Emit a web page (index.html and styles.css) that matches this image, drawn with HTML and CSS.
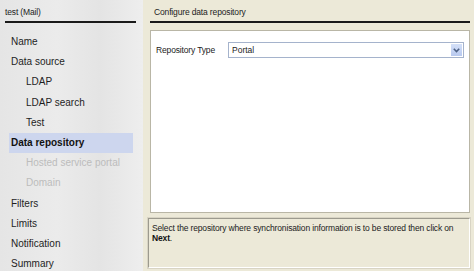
FILE: index.html
```html
<!DOCTYPE html>
<html>
<head>
<meta charset="utf-8">
<link rel="stylesheet" href="styles.css">
</head>
<body>
<div class="sidebar">
  <div class="side-head">test (Mail)</div>
  <ul class="steps">
    <li class="step">Name</li>
    <li class="step">Data source</li>
    <li class="step sub">LDAP</li>
    <li class="step sub">LDAP search</li>
    <li class="step sub">Test</li>
    <li class="step active">Data repository</li>
    <li class="step sub disabled">Hosted service portal</li>
    <li class="step sub disabled">Domain</li>
    <li class="step">Filters</li>
    <li class="step">Limits</li>
    <li class="step">Notification</li>
    <li class="step">Summary</li>
  </ul>
</div>
<div class="main">
  <div class="main-head">Configure data repository</div>
  <div class="panel">
    <div class="field">
      <span class="label">Repository Type</span>
      <div class="select">
        <span class="value">Portal</span>
        <span class="drop"><svg width="7" height="5" viewBox="0 0 7 5"><path d="M0.8 0.8 L3.5 3.5 L6.2 0.8" fill="none" stroke="#4d6185" stroke-width="1.6"/></svg></span>
      </div>
    </div>
  </div>
  <div class="info">Select the repository where synchronisation information is to be stored then click on <b>Next</b>.</div>
</div>
</body>
</html>
```
FILE: styles.css
```css
html, body {
  margin: 0;
  padding: 0;
}
body {
  width: 474px;
  height: 271px;
  overflow: hidden;
  display: flex;
  font-family: "Liberation Sans", Arial, sans-serif;
}
.sidebar {
  width: 143px;
  box-sizing: border-box;
  padding: 0 7px 0 5px;
  background: linear-gradient(90deg, #e5e5e5 0%, #ebebeb 40%, #e4e4e4 70%, #eeeeee 100%);
  color: #1e1e1e;
}
.side-head {
  font-size: 8.5px;
  letter-spacing: -0.15px;
  line-height: 10px;
  padding: 7px 0 4px 0;
  border-bottom: 2px solid #1a1a1a;
  color: #222;
}
.steps {
  list-style: none;
  margin: 9px 0 0 0;
  padding: 0;
}
.step {
  font-size: 10px;
  line-height: 20.2px;
  height: 20.2px;
  margin-left: 4px;
  padding-left: 2px;
  width: 124px;
  box-sizing: border-box;
  white-space: nowrap;
}
.step.sub {
  padding-left: 17px;
}
.step.active {
  background: #cdd6ee;
  font-weight: bold;
  color: #111;
}
.step.disabled {
  color: #bcbcbc;
}
.main {
  flex: 1;
  background: #ece9d8;
  padding: 0 4px 3px 5px;
  display: flex;
  flex-direction: column;
}
.main-head {
  font-size: 8.5px;
  letter-spacing: -0.15px;
  line-height: 10px;
  padding: 7px 0 4px 4px;
  margin-left: 2px;
  border-bottom: 2px solid #1a1a1a;
  color: #222;
}
.panel {
  margin: 7px 0 0 2px;
  height: 183px;
  box-sizing: border-box;
  background: #fff;
  border: 1px solid #b9b6a6;
  padding: 11px 5px 0 5px;
}
.field {
  display: flex;
  align-items: center;
  gap: 15px;
}
.label {
  font-size: 8.5px;
  letter-spacing: -0.15px;
  color: #222;
  width: 57px;
  white-space: nowrap;
}
.select {
  width: 236px;
  height: 16px;
  box-sizing: border-box;
  border: 1px solid #a5b3cc;
  display: flex;
  align-items: center;
  justify-content: space-between;
  padding: 0 1px 0 3px;
}
.value {
  font-size: 8.5px;
  color: #222;
}
.drop {
  width: 11px;
  height: 12px;
  background: linear-gradient(#d4e0f8, #b8c9ef);
  display: flex;
  align-items: center;
  justify-content: center;
}
.info {
  margin-top: 5px;
  height: 50px;
  box-sizing: border-box;
  border-top: 1px solid #9c9a8e;
  border-left: 1px solid #9c9a8e;
  border-right: 1px solid #ffffff;
  border-bottom: 1px solid #ffffff;
  box-shadow: 0 0 0 1px #d8d4c4;
  padding: 4px 3px;
  font-size: 8.5px;
  letter-spacing: -0.15px;
  line-height: 10px;
  color: #222;
}
.info b {
  color: #111;
}
```
